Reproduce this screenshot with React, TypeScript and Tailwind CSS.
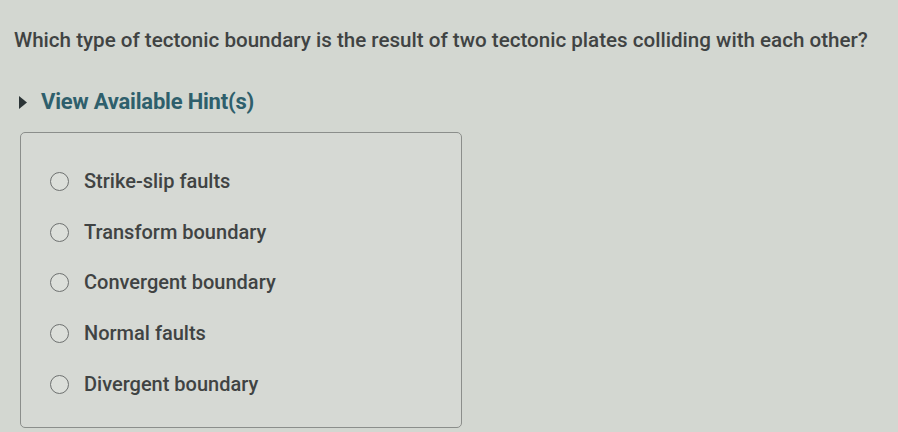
import React from "react";

const options = [
  "Strike-slip faults",
  "Transform boundary",
  "Convergent boundary",
  "Normal faults",
  "Divergent boundary",
];

export default function App() {
  return (
    <div
      className="w-[898px] h-[432px] overflow-hidden bg-[#d3d7d1] text-[#404343]"
      style={{ fontFamily: "Roboto, 'Liberation Sans', sans-serif" }}
    >
      <div className="pt-[26px] pl-[14px]">
        <p className="text-[20.6px] leading-[28px] font-medium whitespace-nowrap">
          Which type of tectonic boundary is the result of two tectonic plates colliding with each other?
        </p>
        <div className="mt-[35px] flex items-center gap-[13px] pl-[4px] text-[#2e5f6c]">
          <svg width="10" height="15" viewBox="0 0 10 15">
            <path d="M1 1 L9 7.5 L1 14 Z" fill="#2b3436" />
          </svg>
          <span className="text-[22px] leading-[26px] font-bold tracking-[-0.2px]">View Available Hint(s)</span>
        </div>
        <div className="mt-[17px] ml-[6px] w-[442px] h-[296px] rounded-[5px] border-[1.5px] border-[#8b8e8b] bg-[#d6d9d4] pt-[35px] pl-[29px]">
          <div className="flex flex-col gap-[23.7px]">
            {options.map((o) => (
              <div key={o} className="flex items-center gap-[15px] h-[27px]">
                <span className="w-[19px] h-[19px] rounded-full border-[1.5px] border-[#6e7170] bg-[#dcdfda]" />
                <span className="text-[20px] leading-[27px] font-medium text-[#404343]">{o}</span>
              </div>
            ))}
          </div>
        </div>
      </div>
    </div>
  );
}
